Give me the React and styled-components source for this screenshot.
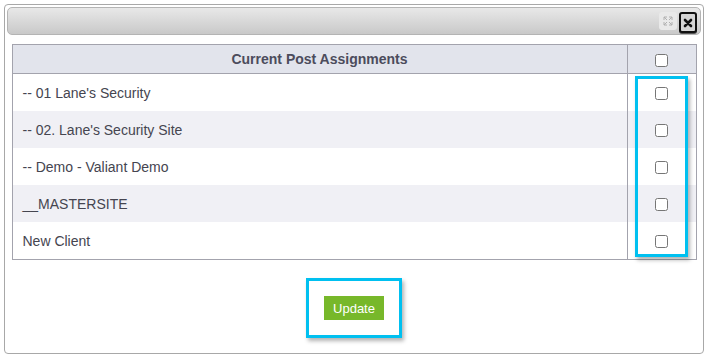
import React from 'react';
import styled, { createGlobalStyle } from 'styled-components';

const GlobalStyle = createGlobalStyle`
  body {
    margin: 0;
    background: #ffffff;
    font-family: 'Liberation Sans', Arial, sans-serif;
  }
`

const Dialog = styled.div`
  margin: 4px 0 0 4px;
  width: 700px;
  height: 350px;
  box-sizing: border-box;
  border: 1px solid #a8a8a8;
  border-radius: 4px;
  padding: 2px;
  display: flex;
  flex-direction: column;
`

const TitleBar = styled.div`
  height: 28px;
  box-sizing: border-box;
  border: 1px solid #b4b4b4;
  border-radius: 5px;
  background: linear-gradient(#e8e8e8, #c9c9c9);
  display: flex;
  justify-content: flex-end;
  align-items: flex-start;
  padding: 4px 3px 0 0;
  gap: 2px;
`

const IconButton = styled.div`
  width: 18px;
  height: ${p => (p.close ? '21px' : '18px')};
  box-sizing: border-box;
  display: flex;
  align-items: center;
  justify-content: center;
  border-radius: 3px;
  background: ${p => (p.close ? '#d6d6d6' : '#e9e9e9')};
  border: ${p => (p.close ? '2px solid #111' : 'none')};
  box-shadow: ${p => (p.close ? '0 1px 0 #555' : 'none')};
`

const Body = styled.div`
  padding: 9px 6px 0 6px;
  display: flex;
  flex-direction: column;
  align-items: center;
`

const TableWrap = styled.div`
  position: relative;
  width: 685px;
`

const Table = styled.table`
  width: 100%;
  border-collapse: collapse;
  border: 1px solid #a3a3ad;
  font-size: 14px;
`

const HeadCell = styled.th`
  height: 28px;
  padding: 0;
  background: #e2e4ec;
  color: #4c4c5c;
  font-weight: bold;
  text-align: center;
  border: 1px solid #a3a3ad;
  width: ${p => p.w || 'auto'};
`

const Row = styled.tr`
  background: ${p => (p.alt ? '#f0f0f5' : '#ffffff')};
`

const Cell = styled.td`
  height: 37px;
  padding: 0 0 0 10px;
  color: #454550;
  border-right: 1px solid #a3a3ad;
  text-align: ${p => (p.center ? 'center' : 'left')};
  ${p => p.center && 'padding: 0;'}
`

const Check = styled.input.attrs({ type: 'checkbox' })`
  margin: 0;
  width: 13px;
  height: 13px;
  vertical-align: middle;
`

const Highlight = styled.div`
  position: absolute;
  left: 623px;
  top: 32px;
  width: 53px;
  height: 181px;
  box-sizing: border-box;
  border: 3px solid #00c0f0;
  box-shadow: 2px 3px 4px rgba(0, 0, 0, 0.3);
  pointer-events: none;
`

const ButtonFrame = styled.div`
  margin-top: 18px;
  border: 3px solid #00c0f0;
  padding: 15px;
  box-shadow: 2px 3px 4px rgba(0, 0, 0, 0.3);
  display: flex;
`

const UpdateButton = styled.button`
  width: 60px;
  height: 24px;
  border: none;
  padding: 0;
  background: #77b82a;
  color: #ffffff;
  font-family: 'Liberation Sans', Arial, sans-serif;
  font-size: 13px;
  cursor: pointer;
`

const rows = [
  '-- 01 Lane\'s Security',
  '-- 02. Lane\'s Security Site',
  '-- Demo - Valiant Demo',
  '__MASTERSITE',
  'New Client',
]

const App = () => {
  return (
    <>
      <GlobalStyle />
      <Dialog>
        <TitleBar>
          <IconButton>
            <svg width="10" height="10" viewBox="0 0 10 10" fill="none" stroke="#b0b0b0" strokeWidth="1">
              <path d="M1 4V1h3M6 1h3v3M9 6v3H6M4 9H1V6M1 1l3 3M9 1L6 4M9 9L6 6M1 9l3-3" />
            </svg>
          </IconButton>
          <IconButton close>
            <svg width="10" height="10" viewBox="0 0 10 10" stroke="#111" strokeWidth="2.6" strokeLinecap="round">
              <path d="M2 2l6 6M8 2L2 8" />
            </svg>
          </IconButton>
        </TitleBar>
        <Body>
          <TableWrap>
            <Table>
              <thead>
                <tr>
                  <HeadCell>Current Post Assignments</HeadCell>
                  <HeadCell w="68px"><Check /></HeadCell>
                </tr>
              </thead>
              <tbody>
                {rows.map((r, i) => (
                  <Row key={r} alt={i % 2 === 1}>
                    <Cell>{r}</Cell>
                    <Cell center><Check /></Cell>
                  </Row>
                ))}
              </tbody>
            </Table>
            <Highlight />
          </TableWrap>
          <ButtonFrame>
            <UpdateButton>Update</UpdateButton>
          </ButtonFrame>
        </Body>
      </Dialog>
    </>
  )
}

export default App
